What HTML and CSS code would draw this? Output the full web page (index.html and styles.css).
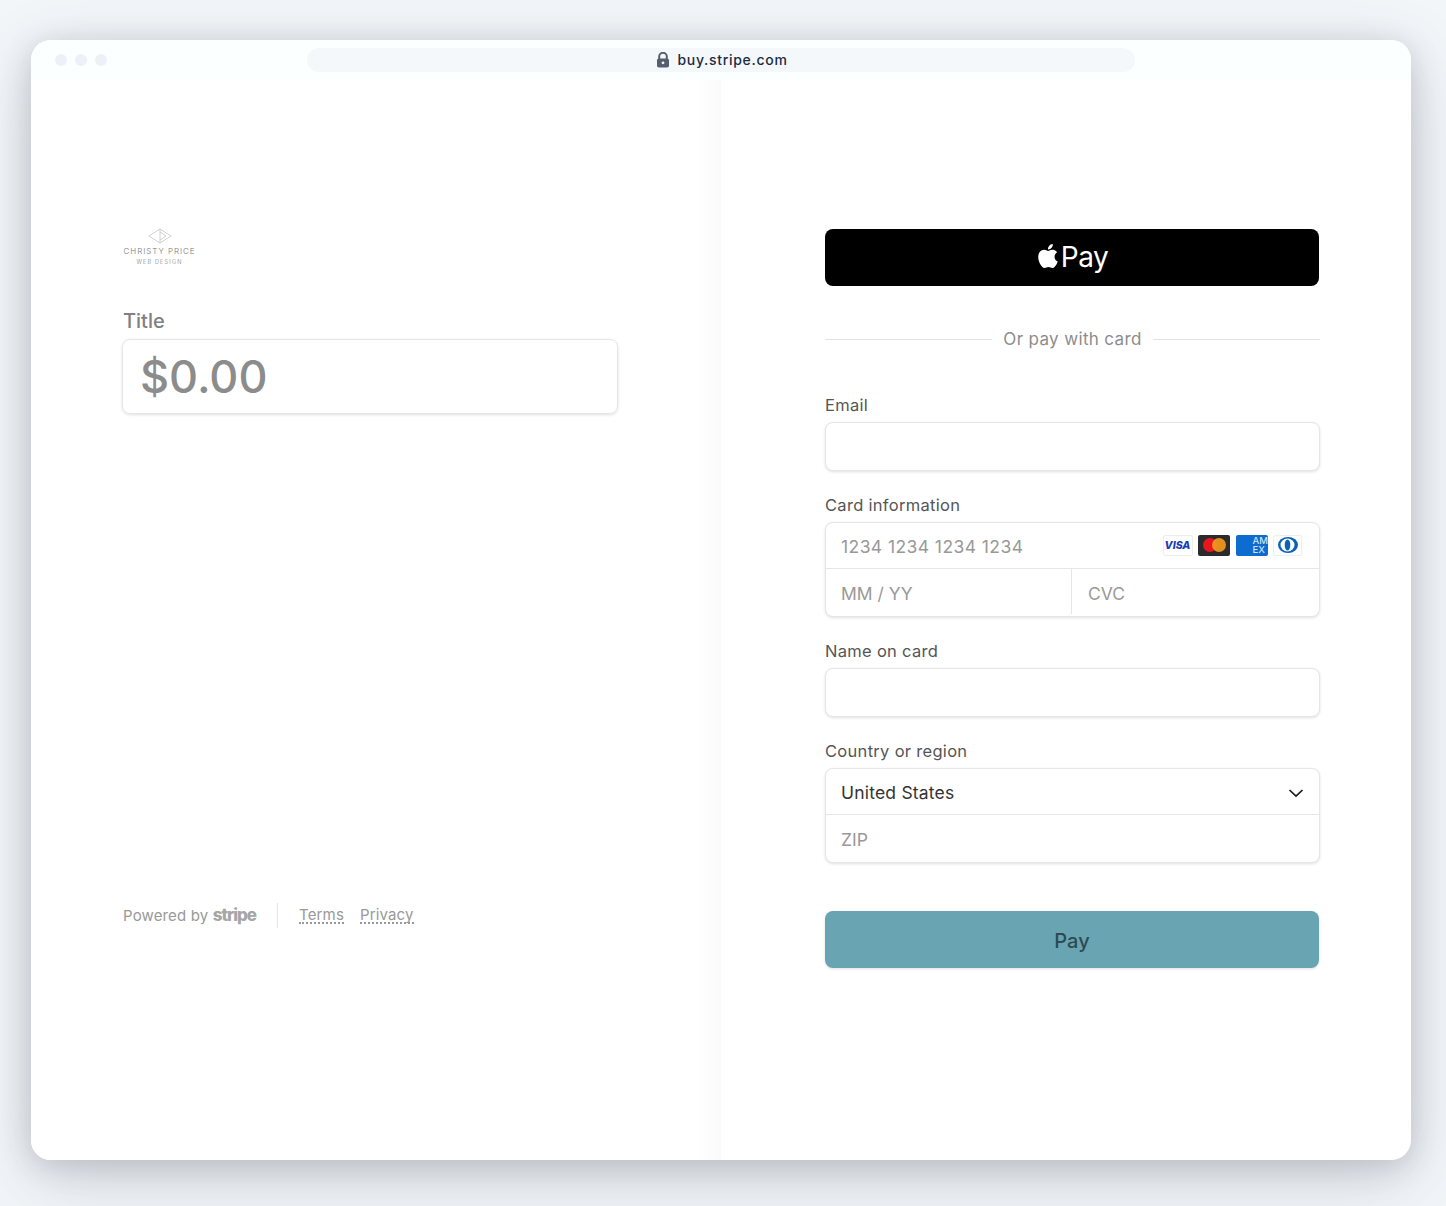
FILE: index.html
```html
<!DOCTYPE html>
<html lang="en">
<head>
  <meta charset="UTF-8" />
  <meta name="viewport" content="width=device-width, initial-scale=1.0"/>
  <title>Checkout</title>
  <link rel="stylesheet" href="styles.css">
</head>
<body>

  <div class="window">
    <div class="titlebar">
      <div class="dots"><span></span><span></span><span></span></div>
      <div class="address">
        <svg class="lock" width="14" height="16" viewBox="0 0 14 16">
          <path d="M3.2 7V4.6a3.8 3.8 0 0 1 7.6 0V7" fill="none" stroke="#565d6c" stroke-width="2"/>
          <rect x="1" y="6.4" width="12" height="9.2" rx="1.8" fill="#565d6c"/>
          <circle cx="7" cy="10.800" r="1.400" fill="#f5f8fa"/>
        </svg>
        <span>buy.stripe.com</span>
      </div>
    </div>

    <div class="panels">
      <section class="summary">
        <div class="logo">
          <svg width="24" height="16" viewBox="0 0 24 16">
            <path d="M1 8 12 1l11 7-11 7zM12 1v14M12 4l6 4-6 4" fill="none" stroke="#bdbdbd" stroke-width=".7"/>
          </svg>
          <div class="logo-name">CHRISTY PRICE</div>
          <div class="logo-sub">WEB DESIGN</div>
        </div>
        <div class="product-title">Title</div>
        <div class="amount">$0.00</div>

        <footer class="legal">
          <span class="powered">Powered by <b>stripe</b></span>
          <a href="#">Terms</a>
          <a href="#">Privacy</a>
        </footer>
      </section>

      <section class="payment">
        <button class="apple-pay" type="button">
          <svg width="24" height="24" viewBox="0 0 24 24" fill="#fff">
            <path d="M12.152 6.896c-.948 0-2.415-1.078-3.96-1.040-2.040.027-3.910 1.183-4.961 3.014-2.117 3.675-.546 9.103 1.519 12.090 1.013 1.454 2.208 3.090 3.792 3.039 1.520-.065 2.090-.987 3.935-.987 1.831 0 2.350.987 3.960.948 1.637-.026 2.676-1.480 3.676-2.948 1.156-1.688 1.636-3.325 1.662-3.415-.039-.013-3.182-1.221-3.220-4.857-.026-3.040 2.480-4.494 2.597-4.559-1.429-2.090-3.623-2.324-4.390-2.376-2-.156-3.675 1.090-4.610 1.090zM15.530 3.830c.843-1.012 1.400-2.427 1.245-3.830-1.207.052-2.662.805-3.532 1.818-.78.896-1.454 2.338-1.273 3.714 1.338.104 2.715-.688 3.559-1.701"/>
          </svg>
          <span>Pay</span>
        </button>

        <div class="or-line"><span>Or pay with card</span></div>

        <div class="group first">
          <label>Email</label>
          <div class="field"></div>
        </div>

        <div class="group">
          <label>Card information</label>
          <div class="field-box">
            <div class="row card-row">
              <span class="placeholder card-number">1234 1234 1234 1234</span>
              <div class="brands">
                <span class="brand visa">VISA</span>
                <span class="brand mc"><i></i><i></i></span>
                <span class="brand amex"><em>AM<br>EX</em></span>
                <span class="brand diners">
                  <svg width="22" height="18" viewBox="0 0 22 18">
                    <ellipse cx="11" cy="9" rx="10" ry="8" fill="#0b62b4"/>
                    <ellipse cx="10.500" cy="9" rx="7" ry="6.500" fill="#fff"/>
                    <ellipse cx="10.500" cy="9" rx="2.800" ry="5.500" fill="#0b62b4"/>
                  </svg>
                </span>
              </div>
            </div>
            <div class="row split">
              <div class="cell"><span class="placeholder">MM / YY</span></div>
              <div class="cell"><span class="placeholder">CVC</span></div>
            </div>
          </div>
        </div>

        <div class="group">
          <label>Name on card</label>
          <div class="field"></div>
        </div>

        <div class="group">
          <label>Country or region</label>
          <div class="field-box">
            <div class="row select-row">
              <span class="country">United States</span>
              <svg width="16" height="10" viewBox="0 0 16 10">
                <path d="M1.500 2 8 8l6.500-6" fill="none" stroke="#1a1a1a" stroke-width="1.700"/>
              </svg>
            </div>
            <div class="row zip-row"><span class="placeholder">ZIP</span></div>
          </div>
        </div>

        <button class="pay" type="button">Pay</button>
      </section>
    </div>
  </div>

</body>
</html>
```

FILE: styles.css
```css
* {
  box-sizing: border-box;
}
body {
  margin: 0;
  padding: 40px 35px 46px 31px;
  background: #f3f6f9;
  font-family: Inter, "Liberation Sans", sans-serif;
  color: #4f4f4f;
}
.window {
  height: 1120px;
  background: #fff;
  border-radius: 20px;
  overflow: hidden;
  box-shadow: 0 20px 70px rgba(60, 66, 87, 0.2), 0 5px 30px rgba(60, 66, 87, 0.2);
  display: flex;
  flex-direction: column;
}

.titlebar {
  height: 40px;
  flex: none;
  background: #fbffff;
  display: flex;
  align-items: center;
  padding-left: 24px;
}
.dots {
  display: flex;
  gap: 8px;
  width: 252px;
}
.dots span {
  width: 12px;
  height: 12px;
  border-radius: 50%;
  background: #edf0f7;
}
.address {
  width: 828px;
  height: 24px;
  padding-left: 2px;
  border-radius: 12px;
  background: #f5f8fa;
  display: flex;
  align-items: center;
  justify-content: center;
  gap: 7px;
  font-size: 14px;
  line-height: 22px;
  font-weight: 500;
  letter-spacing: 0.7px;
  color: #1a2b42;
}
.address span {
  margin-top: -1px;
}

.panels {
  flex: 1;
  display: flex;
}
.summary {
  width: 690px;
  padding: 148px 0 0 92px;
  background: linear-gradient(to right, #fff 664px, #fafafa 690px);
}
.payment {
  flex: 1;
  padding: 149px 91px 0 104px;
}

.logo {
  width: 73px;
  height: 40px;
  text-align: center;
  color: #777;
}
.logo svg {
  display: block;
  margin: 0 auto 2px;
}
.logo-name {
  font-size: 8px;
  line-height: 10px;
  font-weight: 300;
  letter-spacing: 0.95px;
  white-space: nowrap;
}
.logo-sub {
  font-size: 5.500px;
  line-height: 10px;
  margin-top: 1px;
  font-weight: 300;
  letter-spacing: 1.200px;
}
.product-title {
  margin-top: 40px;
  font-size: 20px;
  line-height: 26px;
  font-weight: 500;
  color: #808080;
}
.amount {
  width: 496px;
  height: 75px;
  margin-top: 5px;
  margin-left: -1px;
  padding-left: 17px;
  border: 1.500px solid #e6e6e6;
  border-radius: 8px;
  box-shadow: 0 1px 3px rgba(0, 0, 0, 0.12);
  font-size: 45px;
  line-height: 74px;
  font-weight: 500;
  color: #8c8c8c;
}
.legal {
  margin-top: 489px;
  display: flex;
  align-items: center;
  height: 24px;
  font-size: 15px;
  color: #999;
}
.powered {
  padding-right: 21px;
  border-right: 1px solid #e6e6e6;
  margin-right: 21px;
  line-height: 24px;
  letter-spacing: 0.15px;
}
.powered b {
  font-size: 17px;
  letter-spacing: -1px;
  font-weight: 800;
  color: #a6a6a6;
}
.legal a {
  color: #999;
  text-decoration: none;
  border-bottom: 2px dotted #999;
  line-height: 15px;
  margin-top: 1px;
  margin-right: 16px;
  letter-spacing: 0.15px;
}

.apple-pay {
  display: flex;
  align-items: center;
  justify-content: center;
  gap: 1px;
  width: 494px;
  height: 57px;
  padding-bottom: 2px;
  background: #000;
  border: 0;
  border-radius: 8px;
  color: #fff;
  font-family: inherit;
  font-size: 28px;
  letter-spacing: -0.5px;
}
.apple-pay svg {
  margin-top: -3px;
}
.or-line {
  display: flex;
  align-items: center;
  gap: 11px;
  margin-top: 41px;
  height: 24px;
  font-size: 17px;
  letter-spacing: 0.35px;
  color: #8c8c8c;
}
.or-line::before,
.or-line::after {
  content: "";
  flex: 1;
  height: 1px;
  background: #e3e3e3;
}

.group {
  margin-top: 24.500px;
}
.group.first {
  margin-top: 44px;
}
.group label {
  display: block;
  height: 20px;
  margin-bottom: 7px;
  font-size: 16.500px;
  line-height: 20px;
  font-weight: 400;
  letter-spacing: 0.3px;
  color: #555;
}
.field,
.field-box {
  width: 495px;
  border-radius: 8px;
  border: 1.500px solid #e6e6e6;
  box-shadow: 0 1px 3px rgba(0, 0, 0, 0.12);
  background: #fff;
}
.field {
  height: 48.500px;
}
.field-box {
  height: 94.500px;
}
.row {
  height: 45.500px;
  display: flex;
  align-items: center;
  padding: 3px 15px 0;
  font-size: 17.500px;
}
.zip-row {
  padding-top: 5px;
}
.placeholder {
  color: #999;
}
.card-number {
  letter-spacing: 0.42px;
}
.country {
  letter-spacing: 0.2px;
}
.card-row,
.select-row {
  justify-content: space-between;
  border-bottom: 1.500px solid #e6e6e6;
  color: #333;
}
.row.split {
  padding: 0;
}
.cell {
  flex: 1;
  height: 100%;
  padding: 5px 0 0 15px;
  display: flex;
  align-items: center;
}
.cell:first-child {
  flex: none;
  width: 245px;
}
.cell + .cell {
  border-left: 1.500px solid #e6e6e6;
  padding-left: 16px;
}

.brands {
  display: flex;
  gap: 5.500px;
  margin-right: 2px;
  margin-top: -3px;
}
.brand {
  position: relative;
  width: 30px;
  height: 21px;
  border-radius: 2px;
  overflow: hidden;
  display: flex;
  align-items: center;
  justify-content: center;
}
.visa {
  border: 1px solid #eee;
  color: #1a3bb8;
  font-size: 10.500px;
  font-weight: 800;
  font-style: italic;
}
.mc {
  width: 32px;
  background: #2b2b2b;
}
.mc i {
  width: 14px;
  height: 14px;
  border-radius: 50%;
  background: #e8161f;
}
.mc i + i {
  background: #f59b1c;
  margin-left: -5px;
  opacity: 0.9;
}
.amex {
  width: 32px;
  background: #0c6ccf;
  color: #cfe3f7;
}
.amex em {
  position: absolute;
  left: 17px;
  top: 1px;
  font-size: 9.500px;
  line-height: 9.500px;
  font-style: normal;
  font-weight: 500;
}
.diners {
  width: 29px;
  border: 1px solid #eee;
}

.pay {
  display: block;
  width: 494px;
  height: 57px;
  margin-top: 48.500px;
  padding-top: 4px;
  background: #69a4b2;
  border: 0;
  border-radius: 8px;
  box-shadow: 0 1px 3px rgba(0, 0, 0, 0.12);
  color: #2d4a52;
  font-family: inherit;
  font-size: 20px;
  font-weight: 500;
}
```
